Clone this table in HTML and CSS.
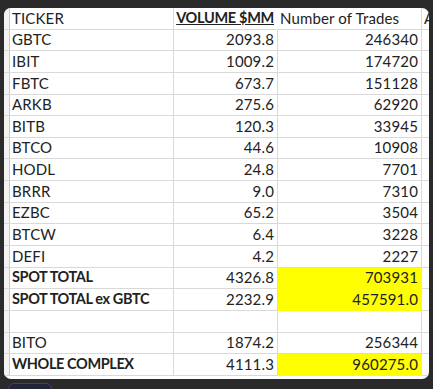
FILE: index.html
```html
<!DOCTYPE html>
<html>
<head>
<meta charset="utf-8">
<link rel="stylesheet" href="styles.css">
</head>
<body>
<div class="card">
  <div class="sheet">
    <div class="rh"></div><div class="c">TICKER</div><div class="c r hv">VOLUME $MM</div><div class="c">Number of Trades</div><div class="c x">A</div>
    <div class="rh"></div><div class="c">GBTC</div><div class="c r">2093.8</div><div class="c r">246340</div><div class="c x"></div>
    <div class="rh"></div><div class="c">IBIT</div><div class="c r">1009.2</div><div class="c r">174720</div><div class="c x"></div>
    <div class="rh"></div><div class="c">FBTC</div><div class="c r">673.7</div><div class="c r">151128</div><div class="c x"></div>
    <div class="rh"></div><div class="c">ARKB</div><div class="c r">275.6</div><div class="c r">62920</div><div class="c x"></div>
    <div class="rh"></div><div class="c">BITB</div><div class="c r">120.3</div><div class="c r">33945</div><div class="c x"></div>
    <div class="rh"></div><div class="c">BTCO</div><div class="c r">44.6</div><div class="c r">10908</div><div class="c x"></div>
    <div class="rh"></div><div class="c">HODL</div><div class="c r">24.8</div><div class="c r">7701</div><div class="c x"></div>
    <div class="rh"></div><div class="c">BRRR</div><div class="c r">9.0</div><div class="c r">7310</div><div class="c x"></div>
    <div class="rh"></div><div class="c">EZBC</div><div class="c r">65.2</div><div class="c r">3504</div><div class="c x"></div>
    <div class="rh"></div><div class="c">BTCW</div><div class="c r">6.4</div><div class="c r">3228</div><div class="c x"></div>
    <div class="rh"></div><div class="c">DEFI</div><div class="c r">4.2</div><div class="c r">2227</div><div class="c x"></div>
    <div class="rh"></div><div class="c b">SPOT TOTAL</div><div class="c r">4326.8</div><div class="c r hl">703931</div><div class="c x"></div>
    <div class="rh"></div><div class="c b">SPOT TOTAL ex GBTC</div><div class="c r">2232.9</div><div class="c r hl">457591.0</div><div class="c x"></div>
    <div class="rh"></div><div class="c"></div><div class="c r"></div><div class="c r"></div><div class="c x"></div>
    <div class="rh"></div><div class="c">BITO</div><div class="c r">1874.2</div><div class="c r">256344</div><div class="c x"></div>
    <div class="rh"></div><div class="c b">WHOLE COMPLEX</div><div class="c r">4111.3</div><div class="c r hl">960275.0</div><div class="c x"></div>
  </div>
</div>
<div class="btn"></div>
</body>
</html>
```
FILE: styles.css
```css
html, body {
  margin: 0;
  padding: 0;
  background: #2a2a2a;
  height: 100%;
  overflow: hidden;
}
body {
  padding: 8px 4px 0 4px;
  box-sizing: border-box;
}
.card {
  width: 425px;
  height: 371px;
  background: #ffffff;
  border-radius: 7px;
  overflow: hidden;
}
.sheet {
  display: grid;
  grid-template-columns: 6px 164px 104px 144px 20px;
  grid-auto-rows: 21.65px;
  font-family: "Lato", "Liberation Sans", sans-serif;
  font-size: 15px;
  letter-spacing: 0.15px;
  color: #222222;
}
.c, .rh {
  box-sizing: border-box;
  border-right: 1px solid #d9d9d9;
  border-bottom: 1px solid #d9d9d9;
  display: flex;
  align-items: flex-end;
  padding: 0 3px 2px 2px;
  line-height: 18px;
  white-space: nowrap;
  overflow: hidden;
}
.rh {
  background: #f3f3f3;
  border-right-color: #c8c8c8;
  padding: 0;
}
.r {
  justify-content: flex-end;
}
.b {
  font-weight: bold;
  font-size: 14.5px;
  letter-spacing: -0.4px;
}
.hv {
  font-weight: bold;
  font-size: 14.5px;
  letter-spacing: -0.3px;
  text-decoration: underline;
  border-right-color: #ffffff;
  overflow: visible;
}
.hl {
  background: #ffff00;
  border-right-color: #ffff00;
  border-bottom-color: #ffff00;
}
.x {
  border-right: none;
  padding-left: 2px;
}
.btn {
  margin: 4px 0 0 4px;
  width: 42px;
  height: 12px;
  border: 1px solid #3d4270;
  border-radius: 6px;
  background: #23243a;
}
```
